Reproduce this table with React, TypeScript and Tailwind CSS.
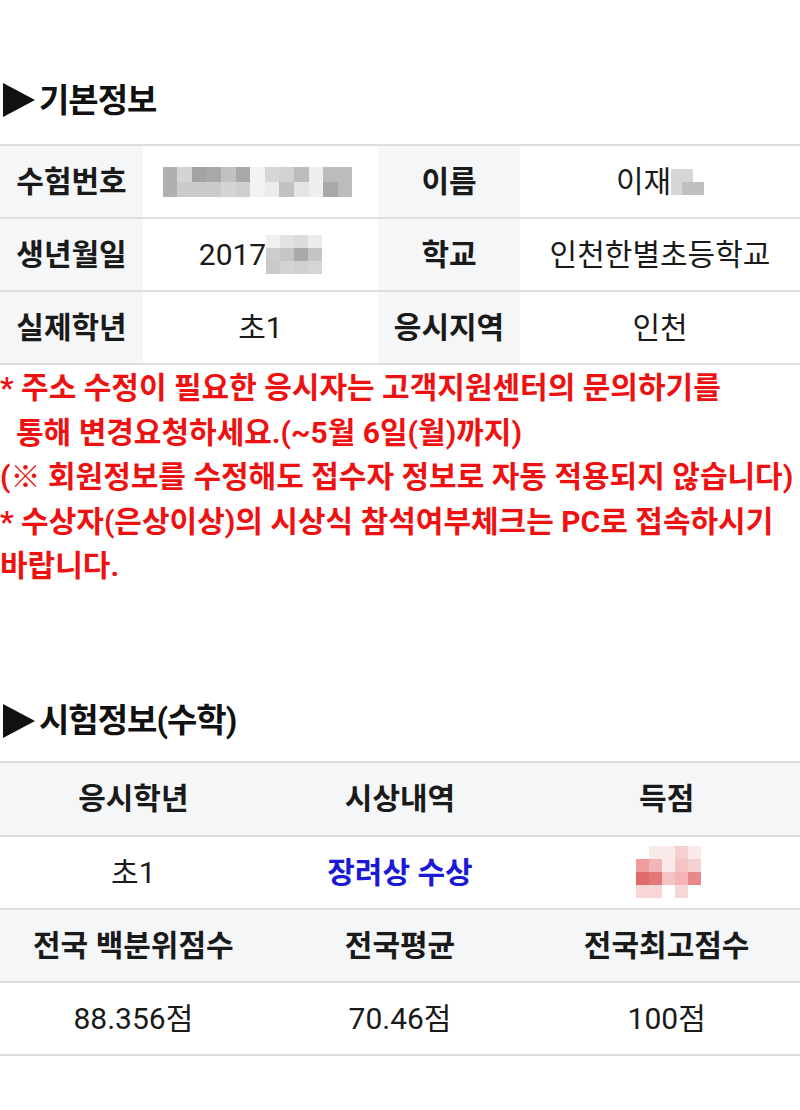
import React from "react";

const FONT = "font-['Roboto','Noto_Sans_CJK_KR',sans-serif]";

// blurred (mosaic) placeholder: rows of cell colours
function Mosaic({ cells, size, className = "" }: { cells: string[][]; size: [number, number]; className?: string }) {
  return (
    <span className={`inline-flex flex-col ${className}`}>
      {cells.map((row, r) => (
        <span key={r} className="flex">
          {row.map((c, i) => (
            <span key={i} style={{ width: size[0], height: size[1], background: c }} />
          ))}
        </span>
      ))}
    </span>
  );
}

function Heading({ children }: { children: React.ReactNode }) {
  return (
    <h2 className="flex items-center gap-[4px] pl-[3px] text-[33px] font-bold leading-none tracking-[-1px] text-[#111]">
      <svg width="32" height="34" viewBox="0 0 32 34" className="shrink-0">
        <path d="M0 0 L32 17 L0 34 Z" fill="#111" />
      </svg>
      <span>{children}</span>
    </h2>
  );
}

const label = "flex items-center justify-center bg-[#f5f6f8] text-[30px] font-bold text-[#1a1a1a]";
const value = "flex items-center justify-center bg-white text-[30px] text-[#1a1a1a]";

export default function App() {
  const idBlur = [
    ["#b0b0b0", "#d4d4d4", "#a4a4a4", "#a8a8a8", "#c2c2c2", "#a8a8a8", "#f2f2f2", "#d6d6d6", "#d2d2d2", "#bcbcbc", "#efefef", "#bcbcbc", "#bcbcbc"],
    ["#b0b0b0", "#cbcbcb", "#cbcbcb", "#cbcbcb", "#d4d4d4", "#cfcfcf", "#f2f2f2", "#ececec", "#c2c2c2", "#e4e4e4", "#efefef", "#a8a8a8", "#bcbcbc"],
  ];
  return (
    <div className={`min-h-[1110px] w-[800px] bg-white pt-[83px] ${FONT}`}>
      <Heading>기본정보</Heading>

      <div className="mt-[27px] border-t-2 border-[#dedede]">
        {[
          ["수험번호", "id", "이름", "name"],
          ["생년월일", "birth", "학교", "인천한별초등학교"],
          ["실제학년", "초1", "응시지역", "인천"],
        ].map((r, i) => (
          <div key={i} className="grid h-[73px] grid-cols-[143px_235px_142px_1fr] border-b-2 border-[#dedede]">
            <div className={label}>{r[0]}</div>
            <div className={value}>
              {r[1] === "id" ? (
                <Mosaic cells={idBlur} size={[14.6, 15]} className="mr-[6px]" />
              ) : r[1] === "birth" ? (
                <span className="flex items-center">
                  2017
                  <Mosaic
                    cells={[
                      ["#f0f0f0", "#e2e2e2", "#dcdcdc", "#ececec"],
                      ["#cdcdcd", "#c6c6c6", "#a9a9a9", "#c4c4c4"],
                      ["#c9c9c9", "#d3d3d3", "#d0d0d0", "#d5d5d5"],
                    ]}
                    size={[14, 13]}
                  />
                </span>
              ) : (
                r[1]
              )}
            </div>
            <div className={label}>{r[2]}</div>
            <div className={value}>
              {r[3] === "name" ? (
                <span className="flex items-center">
                  이재
                  <Mosaic
                    cells={[
                      ["#d6d6d6", "#d6d6d6", "#ffffff"],
                      ["#d6d6d6", "#bfbfbf", "#bfbfbf"],
                    ]}
                    size={[11, 13]}
                  />
                </span>
              ) : (
                r[3]
              )}
            </div>
          </div>
        ))}
      </div>

      <div className="mt-[1px] text-[30px] font-bold leading-[44.5px] text-[#ee1111]">
        <p>* 주소 수정이 필요한 응시자는 고객지원센터의 문의하기를</p>
        <p className="pl-[16px]">통해 변경요청하세요.(~5월 6일(월)까지)</p>
        <p>(※ 회원정보를 수정해도 접수자 정보로 자동 적용되지 않습니다)</p>
        <p>* 수상자(은상이상)의 시상식 참석여부체크는 PC로 접속하시기</p>
        <p>바랍니다.</p>
      </div>

      <div className="mt-[115px]">
        <Heading>시험정보(수학)</Heading>
      </div>

      <div className="mt-[23px] border-t-2 border-[#dedede]">
        <div className="grid h-[74px] grid-cols-3 border-b-2 border-[#dedede]">
          <div className={label}>응시학년</div>
          <div className={label}>시상내역</div>
          <div className={label}>득점</div>
        </div>
        <div className="grid h-[73px] grid-cols-3 border-b-2 border-[#dedede]">
          <div className={value}>초1</div>
          <div className={`${value} font-bold text-[#1a1ad6]`}>장려상 수상</div>
          <div className={value}>
            <Mosaic
              cells={[
                ["#ffffff", "#fbeaea", "#fbeaea", "#f6d0d0", "#fbeaea"],
                ["#ee9c9c", "#f2b4b4", "#fbeaea", "#f4c4c4", "#f6d0d0"],
                ["#e06a6a", "#e57878", "#f4c4c4", "#f2b4b4", "#e98888"],
                ["#f6d6d6", "#f6d6d6", "#ffffff", "#f6d6d6", "#ffffff"],
              ]}
              size={[13, 13]}
              className="ml-[4px]"
            />
          </div>
        </div>
        <div className="grid h-[73px] grid-cols-3 border-b-2 border-[#dedede]">
          <div className={label}>전국 백분위점수</div>
          <div className={label}>전국평균</div>
          <div className={label}>전국최고점수</div>
        </div>
        <div className="grid h-[73px] grid-cols-3 border-b-2 border-[#dedede]">
          <div className={value}>88.356점</div>
          <div className={value}>70.46점</div>
          <div className={value}>100점</div>
        </div>
      </div>
    </div>
  );
}
